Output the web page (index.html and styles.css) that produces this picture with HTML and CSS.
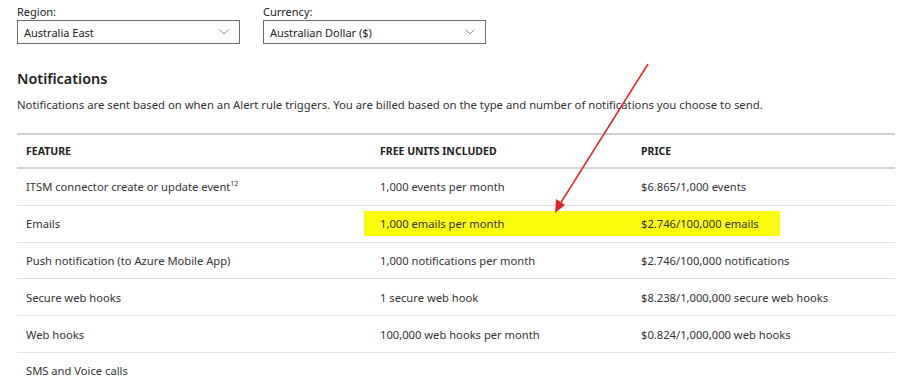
FILE: index.html
```html
<!DOCTYPE html>
<html>
<head>
<meta charset="utf-8">
<link rel="stylesheet" href="styles.css">
</head>
<body>
<div class="page">
  <div class="filters">
    <div class="field">
      <div class="label">Region:</div>
      <div class="select"><span>Australia East</span><svg class="chev" width="10" height="6" viewBox="0 0 10 6"><path d="M0.5 0.5 L5 5 L9.5 0.5" fill="none" stroke="#888" stroke-width="0.9"/></svg></div>
    </div>
    <div class="field">
      <div class="label">Currency:</div>
      <div class="select"><span>Australian Dollar ($)</span><svg class="chev" width="10" height="6" viewBox="0 0 10 6"><path d="M0.5 0.5 L5 5 L9.5 0.5" fill="none" stroke="#888" stroke-width="0.9"/></svg></div>
    </div>
  </div>
  <h2 class="title">Notifications</h2>
  <p class="desc">Notifications are sent based on when an Alert rule triggers. You are billed based on the type and number of notifications you choose to send.</p>
  <table class="pricing">
    <thead>
      <tr><th class="c1">FEATURE</th><th class="c2">FREE UNITS INCLUDED</th><th class="c3">PRICE</th></tr>
    </thead>
    <tbody>
      <tr><td class="c1">ITSM connector create or update event<sup>12</sup></td><td class="c2">1,000 events per month</td><td class="c3">$6.865/1,000 events</td></tr>
      <tr><td class="c1">Emails</td><td class="c2 hl">1,000 emails per month</td><td class="c3 hl-part">$2.746/100,000 emails</td></tr>
      <tr><td class="c1">Push notification (to Azure Mobile App)</td><td class="c2">1,000 notifications per month</td><td class="c3">$2.746/100,000 notifications</td></tr>
      <tr><td class="c1">Secure web hooks</td><td class="c2">1 secure web hook</td><td class="c3">$8.238/1,000,000 secure web hooks</td></tr>
      <tr><td class="c1">Web hooks</td><td class="c2">100,000 web hooks per month</td><td class="c3">$0.824/1,000,000 web hooks</td></tr>
      <tr class="last"><td class="c1">SMS and Voice calls</td><td class="c2"></td><td class="c3"></td></tr>
    </tbody>
  </table>
  <svg class="arrow" width="900" height="385" viewBox="0 0 900 385">
    <line x1="648" y1="64" x2="560" y2="204" stroke="#e3262a" stroke-width="1.5"/>
    <path d="M555 213 L556 199 L565 205 Z" fill="#e3262a"/>
  </svg>
</div>
</body>
</html>
```

FILE: styles.css
```css
html, body {
  margin: 0;
  padding: 0;
  background: #fff;
}
body {
  font-family: "Noto Sans", "Open Sans", sans-serif;
  color: #333;
  width: 900px;
  height: 385px;
  overflow: hidden;
}
.page {
  position: relative;
  padding: 5px 5px 0 17px;
}
.filters {
  display: flex;
  gap: 23px;
}
.field {
  display: flex;
  flex-direction: column;
  width: 223px;
}
.label {
  font-size: 11px;
  line-height: 14px;
  color: #222;
  margin-bottom: 1px;
}
.select {
  box-sizing: border-box;
  height: 24px;
  border: 1px solid #6b6b6b;
  display: flex;
  align-items: center;
  justify-content: space-between;
  padding: 0 10px 0 6px;
  font-size: 11px;
  color: #222;
}
.chev { display: block; }
.title {
  margin: 25px 0 0 0;
  font-size: 14.4px;
  font-weight: 600;
  line-height: 20px;
  color: #222;
}
.desc {
  margin: 9px 0 0 0;
  font-size: 11.3px;
  line-height: 14px;
  color: #333;
}
.pricing {
  margin-top: 21px;
  width: 878px;
  border-collapse: collapse;
  table-layout: fixed;
  border-top: 2px solid #cfcfcf;
  font-size: 11.2px;
}
.pricing th {
  text-align: left;
  font-weight: 700;
  font-size: 10.5px;
  color: #222;
  height: 32px;
  border-bottom: 2px solid #d6d6d6;
}
.pricing td {
  height: 35.8px;
  border-bottom: 1px solid #e2e2e2;
  color: #333;
}
.pricing th, .pricing td {
  padding: 0;
  vertical-align: middle;
}
.pricing tr.last td { border-bottom: none; }
.c1 { width: 338px; padding-left: 9px !important; }
.c2 { width: 245px; padding-left: 16px !important; }
.c3 { padding-left: 16px !important; }
sup {
  font-size: 7px;
  vertical-align: 5px;
  line-height: 0;
}
.hl {
  background: linear-gradient(#fbfb0c, #fbfb0c) no-repeat 0 center / 100% 25px;
}
.hl-part {
  background: linear-gradient(#fbfb0c, #fbfb0c) no-repeat 0 center / 155px 25px;
}
.arrow {
  position: absolute;
  left: 0;
  top: 0;
  pointer-events: none;
}
```
